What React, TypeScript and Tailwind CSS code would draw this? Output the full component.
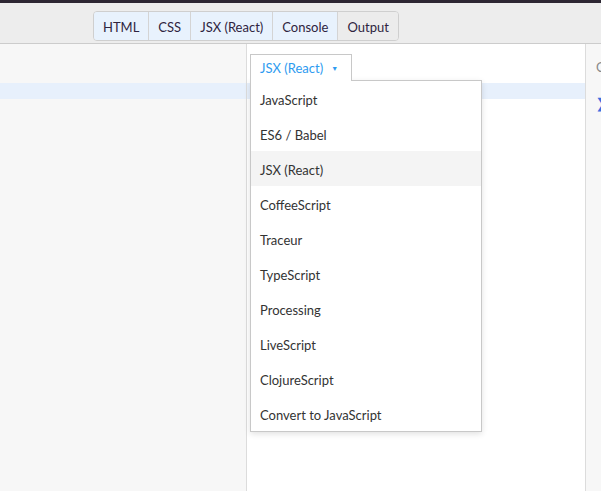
const tabs = [
  { label: "HTML", active: true },
  { label: "CSS", active: true },
  { label: "JSX (React)", active: true },
  { label: "Console", active: true },
  { label: "Output", active: false },
];

const languages = [
  "JavaScript",
  "ES6 / Babel",
  "JSX (React)",
  "CoffeeScript",
  "Traceur",
  "TypeScript",
  "Processing",
  "LiveScript",
  "ClojureScript",
  "Convert to JavaScript",
];

export default function App() {
  return (
    <div className="flex h-[491px] w-[601px] flex-col overflow-hidden bg-white font-['Lato',_'Noto_Sans',_sans-serif] text-[13px]">
      <div className="h-[3px] shrink-0 bg-[#2d2733]" />

      {/* toolbar */}
      <div className="flex h-[41px] shrink-0 border-b border-[#cccccc] bg-[#ededed] pl-[93px] pt-[8px]">
        <div className="flex h-[30px] overflow-hidden rounded-[4px] border border-[#cfcfcf]">
          {tabs.map((t, i) => (
            <div
              key={t.label}
              className={`flex items-center px-[9px] pt-[3px] text-[#2f2440] ${i > 0 ? "border-l border-[#d4d4d4]" : ""} ${
                t.active ? "bg-[#e8f2fd]" : "bg-[#ececec]"
              }`}
            >
              {t.label}
            </div>
          ))}
        </div>
      </div>

      <div className="flex flex-1">
        {/* left pane */}
        <div className="w-[246px] shrink-0 bg-[#f7f7f7] pt-[39px]">
          <div className="h-[16px] bg-[#e7f0fc]" />
        </div>

        {/* editor pane */}
        <div className="relative w-[339px] shrink-0 border-l border-[#dcdcdc] bg-white pt-[39px]">
          <div className="h-[16px] bg-[#e7f0fc]" />

          <div className="absolute left-[3px] top-[10px] z-10">
            <div className="relative z-20 flex h-[27px] w-[102px] items-center gap-[8px] border border-b-0 border-[#c8c8c8] bg-white pl-[9px] pt-[1px] text-[#2e9bf0]">
              <span>JSX (React)</span>
              <span className="text-[7px] leading-none">▼</span>
            </div>
            <div className="-mt-px w-[232px] border border-[#c8c8c8] bg-white shadow-[0_2px_6px_rgba(0,0,0,0.12)]">
              {languages.map((l) => (
                <div
                  key={l}
                  className={`flex h-[35px] items-center pl-[9px] pt-[4px] text-[#333333] ${
                    l === "JSX (React)" ? "bg-[#f4f4f4]" : ""
                  }`}
                >
                  {l}
                </div>
              ))}
            </div>
          </div>
        </div>

        {/* console pane */}
        <div className="flex-1 overflow-hidden border-l border-[#dcdcdc] bg-[#f7f7f7] pl-[10px] pt-[14px]">
          <div className="whitespace-nowrap text-[#888888]">Console</div>
          <div className="mt-[16px] font-bold text-[#3b6ee0]">❯</div>
        </div>
      </div>
    </div>
  );
}
